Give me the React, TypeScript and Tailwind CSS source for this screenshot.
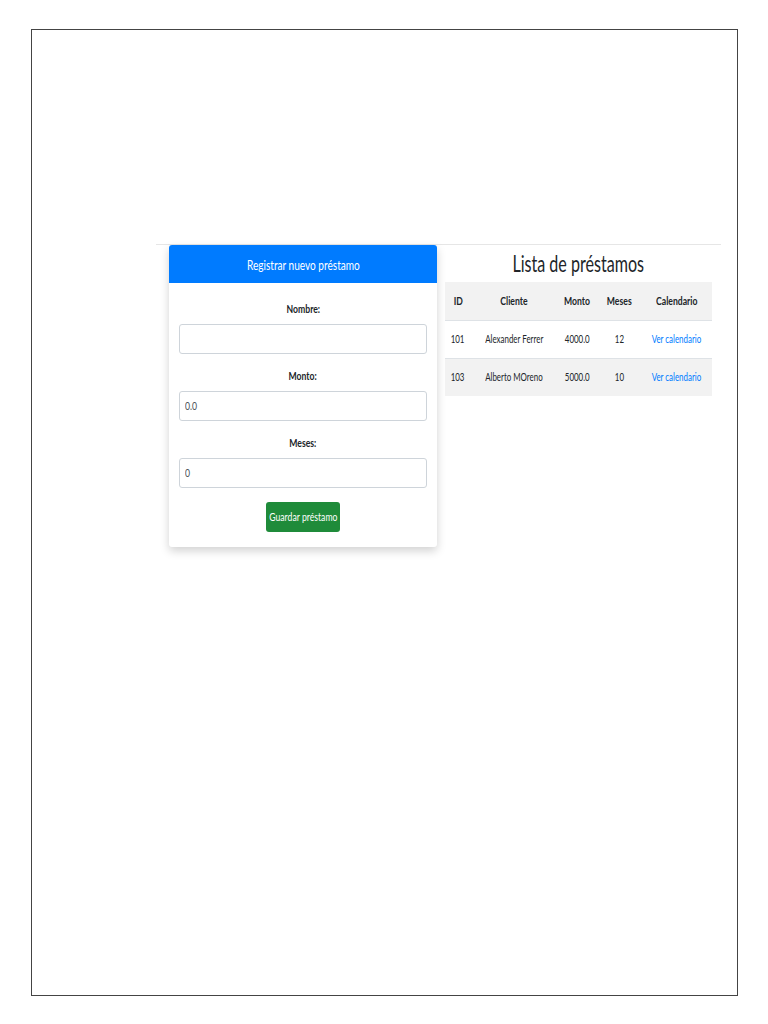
import type { ReactNode } from "react"

const prestamos = [
  { id: 101, cliente: "Alexander Ferrer", monto: "4000.0", meses: 12 },
  { id: 103, cliente: "Alberto MOreno", monto: "5000.0", meses: 10 },
]

// the screenshot text is squeezed horizontally
function N({ children, left, tight }: { children: ReactNode; left?: boolean; tight?: boolean }) {
  return (
    <span
      className={`inline-block whitespace-nowrap ${tight ? "scale-x-[0.67]" : "scale-x-[0.72]"} ${left ? "origin-left" : "origin-center"}`}
    >
      {children}
    </span>
  )
}

function Campo({ label, value }: { label: string; value: string }) {
  return (
    <div className="flex flex-col">
      <label className="text-center text-[12px] font-bold text-[#212529] h-[16px] leading-[16px] mb-[7px]">
        <N>{label}</N>
      </label>
      <div className="h-[30px] border border-[#ced4da] rounded-[3px] px-[5px] flex items-center text-[12px] text-[#495057]">
        <N left>{value}</N>
      </div>
    </div>
  )
}

export default function App() {
  return (
    <div className="w-[768px] h-[1024px] bg-white pt-[29px] pl-[31px] font-['Lato',sans-serif]">
      <div className="w-[707px] h-[967px] border-[1.5px] border-[#444] pt-[214px] pl-[124px]">
        <div className="w-[565px] border-t border-[#e6e6e6] flex pl-[13px]">
          {/* formulario */}
          <div className="w-[268px] bg-white rounded-[3px] shadow-[0_4px_10px_rgba(0,0,0,0.18)] overflow-hidden">
            <div className="h-[38px] bg-[#007bff] text-white text-[14px] flex items-center justify-center">
              <N>Registrar nuevo préstamo</N>
            </div>
            <div className="px-[10px] pt-[18px] pb-[15px] flex flex-col gap-[14px]">
              <Campo label="Nombre:" value="" />
              <Campo label="Monto:" value="0.0" />
              <Campo label="Meses:" value="0" />
              <div className="flex justify-center">
                <button className="h-[30px] w-[74px] bg-[#1f8b3a] text-white text-[12px] rounded-[3px] flex items-center justify-center">
                  <N>Guardar préstamo</N>
                </button>
              </div>
            </div>
          </div>

          {/* lista */}
          <div className="w-[267px] ml-[8px]">
            <h2 className="text-center text-[24px] text-[#212529] h-[37px] leading-[36px]">
              <N tight>Lista de préstamos</N>
            </h2>
            <table className="w-full table-fixed text-[11px] text-[#212529] border-collapse">
              <colgroup>
                <col className="w-[26px]" />
                <col className="w-[86px]" />
                <col className="w-[40px]" />
                <col className="w-[44px]" />
                <col />
              </colgroup>
              <thead>
                <tr className="bg-[#f2f2f2] h-[38px] text-[12px]">
                  <th className="font-bold"><N>ID</N></th>
                  <th className="font-bold"><N>Cliente</N></th>
                  <th className="font-bold"><N>Monto</N></th>
                  <th className="font-bold"><N>Meses</N></th>
                  <th className="font-bold"><N>Calendario</N></th>
                </tr>
              </thead>
              <tbody>
                {prestamos.map((p, i) => (
                  <tr key={p.id} className={`h-[38px] border-t border-[#dee2e6] ${i % 2 === 1 ? "bg-[#f2f2f2]" : "bg-white"}`}>
                    <td className="text-center"><N>{p.id}</N></td>
                    <td className="text-center"><N>{p.cliente}</N></td>
                    <td className="text-center"><N>{p.monto}</N></td>
                    <td className="text-center"><N>{p.meses}</N></td>
                    <td className="text-center text-[#007bff]"><N>Ver calendario</N></td>
                  </tr>
                ))}
              </tbody>
            </table>
          </div>
        </div>
      </div>
    </div>
  )
}
